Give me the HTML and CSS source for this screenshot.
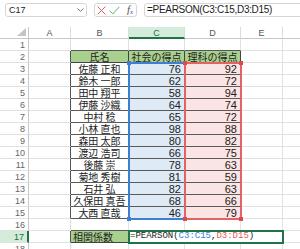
FILE: index.html
```html
<!DOCTYPE html>
<html lang="ja">
<head>
    <meta charset="UTF-8">
    <meta name="viewport" content="width=device-width, initial-scale=1.0">
    <title>PEARSON</title>
    <link rel="stylesheet" href="styles.css">
</head>
<body>
    <div class="formula-bar">
        <div class="name-box">
            <span>C17</span>
            <svg class="chevron" width="7" height="4" viewBox="0 0 7 4"><path d="M0.5 0.5 L3.5 3.3 L6.5 0.5" fill="none" stroke="#666" stroke-width="0.9"/></svg>
        </div>
        <div class="fx-box">
            <svg width="9" height="9" viewBox="0 0 9 9"><path d="M0.6 0.6 L8.4 8.4 M8.4 0.6 L0.6 8.4" stroke="#e0605a" stroke-width="1"/></svg>
            <svg width="11" height="9" viewBox="0 0 11 9"><path d="M0.6 4.6 L3.8 7.9 L10.4 0.8" fill="none" stroke="#5bb56d" stroke-width="1"/></svg>
            <span class="fx"><i>f</i><sub>x</sub></span>
        </div>
        <div class="formula-input">=PEARSON(C3:C15,D3:D15)</div>
    </div>

    <div class="sheet">
        <div class="grid">
            <!-- column headers -->
            <div class="corner"><svg width="9" height="8" viewBox="0 0 9 8"><path d="M9 0 L9 8 L0 8 Z" fill="#c4c4c4"/></svg></div>
            <div class="col">A</div>
            <div class="col">B</div>
            <div class="col active">C</div>
            <div class="col">D</div>
            <div class="col">E</div>
            <div class="col last"></div>

            <!-- 1 -->
            <div class="rh">1</div><div></div><div class="edge-b"></div><div class="edge-b"></div><div class="edge-b"></div><div></div><div class="last"></div>
            <!-- 2 -->
            <div class="rh">2</div><div class="edge-r"></div><div class="th">氏名</div><div class="th">社会の得点</div><div class="th">理科の得点</div><div></div><div class="last"></div>
            <!-- 3..15 -->
            <div class="rh">3</div><div class="edge-r"></div><div class="name">佐藤 正和</div><div class="num c">76</div><div class="num d">92</div><div></div><div class="last"></div>
            <div class="rh">4</div><div class="edge-r"></div><div class="name">鈴木 一郎</div><div class="num c">62</div><div class="num d">72</div><div></div><div class="last"></div>
            <div class="rh">5</div><div class="edge-r"></div><div class="name">田中 翔平</div><div class="num c">58</div><div class="num d">94</div><div></div><div class="last"></div>
            <div class="rh">6</div><div class="edge-r"></div><div class="name">伊藤 沙織</div><div class="num c">64</div><div class="num d">74</div><div></div><div class="last"></div>
            <div class="rh">7</div><div class="edge-r"></div><div class="name">中村 稔</div><div class="num c">65</div><div class="num d">72</div><div></div><div class="last"></div>
            <div class="rh">8</div><div class="edge-r"></div><div class="name">小林 直也</div><div class="num c">98</div><div class="num d">88</div><div></div><div class="last"></div>
            <div class="rh">9</div><div class="edge-r"></div><div class="name">森田 太郎</div><div class="num c">80</div><div class="num d">82</div><div></div><div class="last"></div>
            <div class="rh">10</div><div class="edge-r"></div><div class="name">渡辺 浩司</div><div class="num c">66</div><div class="num d">75</div><div></div><div class="last"></div>
            <div class="rh">11</div><div class="edge-r"></div><div class="name">後藤 崇</div><div class="num c">78</div><div class="num d">63</div><div></div><div class="last"></div>
            <div class="rh">12</div><div class="edge-r"></div><div class="name">菊地 秀樹</div><div class="num c">81</div><div class="num d">59</div><div></div><div class="last"></div>
            <div class="rh">13</div><div class="edge-r"></div><div class="name">石井 弘</div><div class="num c">82</div><div class="num d">63</div><div></div><div class="last"></div>
            <div class="rh">14</div><div class="edge-r"></div><div class="name">久保田 真吾</div><div class="num c">68</div><div class="num d">66</div><div></div><div class="last"></div>
            <div class="rh">15</div><div class="edge-r"></div><div class="name">大西 直哉</div><div class="num c">46</div><div class="num d">79</div><div></div><div class="last"></div>
            <!-- 16 -->
            <div class="rh">16</div><div></div><div class="edge-b"></div><div></div><div></div><div></div><div class="last"></div>
            <!-- 17 -->
            <div class="rh active">17</div><div class="edge-r"></div><div class="label">相関係数</div>
            <div class="editor">=PEARSON(<span class="ref-c">C3:C15</span>,<span class="ref-d">D3:D15</span>)</div>
            <div class="last"></div>
            <!-- 18 -->
            <div class="rh">18</div><div></div><div></div><div></div><div></div><div></div><div class="last"></div>
        </div>

        <div class="range blue"><i class="h tl"></i><i class="h tr"></i><i class="h bl"></i><i class="h br"></i></div>
        <div class="range red"><i class="h tl"></i><i class="h tr"></i><i class="h bl"></i><i class="h br"></i></div>
    </div>
</body>
</html>
```

FILE: styles.css
```css
body {
    margin: 0;
    width: 300px;
    height: 249px;
    overflow: hidden;
    background: #fff;
    font-family: "Liberation Sans", "Noto Sans CJK JP", sans-serif;
    color: #222;
}

/* formula bar */
.formula-bar {
    display: flex;
    align-items: flex-start;
    height: 27px;
    padding: 3px 0 0 5px;
    box-sizing: border-box;
    background: #fff;
}
.name-box,
.fx-box,
.formula-input {
    height: 14px;
    box-sizing: border-box;
    border: 1px solid #d6d6d6;
    border-radius: 3px;
    background: #fff;
}
.name-box {
    width: 82px;
    display: flex;
    align-items: center;
    justify-content: space-between;
    padding: 0 2px 0 3px;
    font-size: 9px;
}
.fx-box {
    width: 43px;
    margin-left: 7px;
    display: flex;
    align-items: center;
    gap: 3px;
    padding-left: 2px;
}
.fx {
    font-family: "Liberation Serif", serif;
    font-size: 11px;
    line-height: 10px;
    color: #555;
    margin-left: 4px;
}
.fx sub {
    font-size: 7px;
    font-style: italic;
    vertical-align: -1px;
}
.formula-input {
    flex: 1;
    margin-left: 7px;
    margin-right: -3px;
    padding-left: 2px;
    font-size: 10px;
    line-height: 12px;
    letter-spacing: -0.3px;
}

/* sheet grid */
.sheet {
    position: relative;
}
.grid {
    display: grid;
    grid-template-columns: 29px 42px 58px 56px 56px 42px 17px;
    grid-auto-rows: 12px;
}
.grid > * {
    box-sizing: border-box;
    border-right: 1px solid #e1e1e1;
    border-bottom: 1px solid #e1e1e1;
    white-space: nowrap;
    line-height: 12px;
}
.grid > .last {
    border-right: none;
}
.corner {
    display: flex;
    align-items: flex-end;
    justify-content: flex-end;
    padding: 0 2px 2px 0;
    border-bottom-color: #c8c8c8;
    border-right-color: #c8c8c8;
}
.grid > .col {
    text-align: center;
    font-size: 9px;
    color: #555;
    border-bottom-color: #c8c8c8;
    border-right-color: #dcdcdc;
}
.grid > .rh {
    text-align: right;
    padding-right: 3px;
    font-size: 9px;
    color: #666;
    border-right-color: #c8c8c8;
}
.grid > .col.active {
    background: #d3ecdb;
    color: #1d6b3c;
    border-bottom: 2px solid #217346;
}
.grid > .rh.active {
    background: #d3ecdb;
    color: #1d6b3c;
    border-right: 2px solid #217346;
}

.grid > .edge-r {
    border-right-color: #555;
}
.grid > .edge-b {
    border-bottom-color: #555;
}
.grid > .th,
.grid > .label {
    background: #a9d08e;
    border-right-color: #444;
    border-bottom-color: #444;
    font-family: "Noto Sans CJK JP", sans-serif;
    font-size: 10px;
    line-height: 11px;
}
.grid > .th {
    text-align: center;
}
.grid > .label {
    padding-left: 2px;
}
.grid > .name {
    text-align: center;
    font-family: "Noto Sans CJK JP", sans-serif;
    font-size: 10px;
    line-height: 11px;
    border-right-color: #5a5a5a;
    border-bottom-color: #5a5a5a;
}
.grid > .num {
    text-align: right;
    padding-right: 3px;
    font-size: 11px;
    border-right-color: #5a5a5a;
    border-bottom-color: #5a5a5a;
}
.c {
    background: #deebf7;
}
.d {
    background: #fbe4e4;
}
.grid > .editor {
    grid-column: span 3;
    position: relative;
    z-index: 1;
    outline: 2px solid #217346;
    outline-offset: -1px;
    background: #fff;
    padding-left: 1px;
    font-family: "Liberation Mono", monospace;
    font-size: 9px;
    line-height: 11px;
    border-right: none;
}
.ref-c {
    color: #3a7fd5;
}
.ref-d {
    color: #e05a5a;
}

/* formula range highlights */
.range {
    position: absolute;
    top: 35px;
    width: 58px;
    height: 158px;
    box-sizing: border-box;
    border: 2px solid;
    z-index: 2;
}
.range.blue {
    left: 128px;
    border-color: #3d7fd2;
}
.range.red {
    left: 184px;
    border-color: #e06464;
}
.h {
    position: absolute;
    width: 4px;
    height: 4px;
}
.blue .h {
    background: #3d7fd2;
}
.red .h {
    background: #e04848;
}
.tl { left: -3px; top: -3px; }
.tr { right: -3px; top: -3px; }
.bl { left: -3px; bottom: -3px; }
.br { right: -3px; bottom: -3px; }
```
